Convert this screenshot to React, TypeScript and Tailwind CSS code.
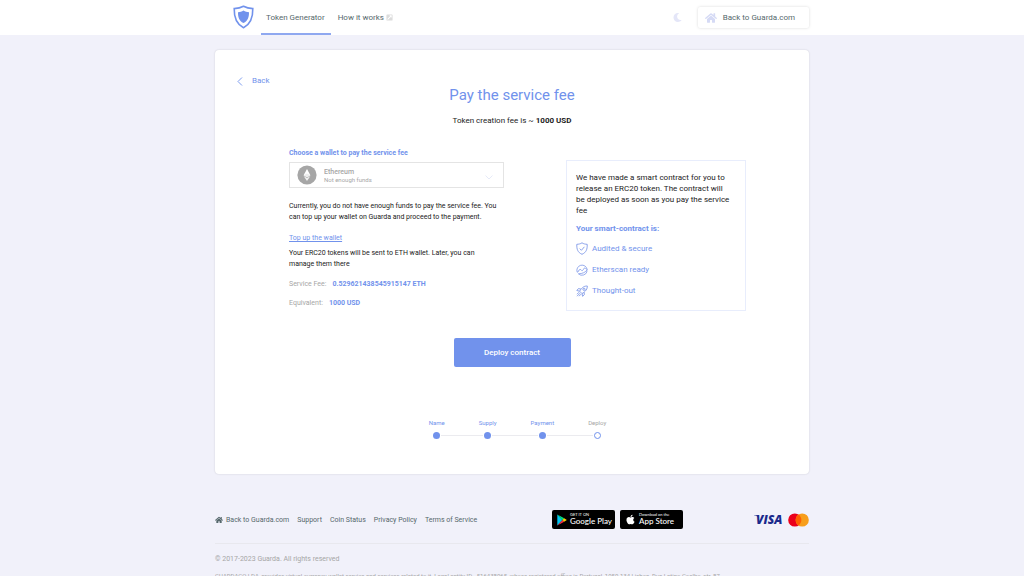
import type { ReactNode } from 'react';
import { FaApple, FaExternalLinkSquareAlt, FaHome, FaMoon } from 'react-icons/fa';

const WALLETS = [{ id: 'eth', name: 'Ethereum', note: 'Not enough funds' }];

const STEPS = [
  { label: 'Name', done: true },
  { label: 'Supply', done: true },
  { label: 'Payment', done: true },
  { label: 'Deploy', done: false },
];

const FOOTER_LINKS = ['Support', 'Coin Status', 'Privacy Policy', 'Terms of Service'];

function GuardaLogo() {
  return (
    <svg viewBox="0 0 21 24" className="h-6 w-[21px]" role="img" aria-label="Guarda">
      <path
        d="M10.5 1.3C13.4 2.9 16.3 3.5 19.8 3.6C20 12.2 18 19.2 10.5 22.7C3 19.2 1 12.2 1.2 3.6C4.7 3.5 7.6 2.9 10.5 1.3Z"
        fill="none"
        stroke="#7192ec"
        strokeWidth="1.6"
      />
      <path
        d="M10.5 5.6C12.2 6.7 13.9 7.1 16 7.2C16.1 12.2 14.8 15.8 10.5 18C6.2 15.8 4.9 12.2 5 7.2C7.1 7.1 8.8 6.7 10.5 5.6Z"
        fill="#7192ec"
      />
    </svg>
  );
}

function EthereumIcon() {
  return (
    <svg viewBox="0 0 20 20" className="h-5 w-5" aria-hidden="true">
      <circle cx="10" cy="10" r="9.6" fill="#a6a6a6" />
      <path d="M10 4L6.6 10.2L10 12.2L13.4 10.2Z" fill="#fff" />
      <path d="M6.6 11L10 16L13.4 11L10 13Z" fill="#f1f1f1" />
      <path d="M10 8.6L6.6 10.2L10 12.2L13.4 10.2Z" fill="#ececec" />
    </svg>
  );
}

function ShieldCheckIcon() {
  return (
    <svg viewBox="0 0 12 13" className="h-[13px] w-3" fill="none" stroke="#7f98e8" strokeWidth="0.9" aria-hidden="true">
      <path d="M6 0.8C7.6 1.9 9.2 2.2 11.2 2.3C11.4 7.4 10.2 10.4 6 12.3C1.8 10.4 0.6 7.4 0.8 2.3C2.8 2.2 4.4 1.9 6 0.8Z" />
      <path d="M3.7 6.6L5.4 8.3L8.4 4.8" />
    </svg>
  );
}

function EtherscanIcon() {
  return (
    <svg viewBox="0 0 12 12" className="h-3 w-3" fill="none" stroke="#7f98e8" strokeWidth="0.8" aria-hidden="true">
      <path d="M1.2 8.2A5.2 5.2 0 1 1 11.2 5.6" />
      <path d="M2.4 9.8A5.2 5.2 0 0 0 11.2 6.6" />
      <path d="M1.2 8.2C2.6 8.6 2.4 5.6 4 5.4C5.4 5.2 5.2 7.2 6.4 6.6C7.8 5.8 7.4 4 8.8 4C10 4 10 5.4 11.2 5.6C9.8 8.2 6.4 9.8 2.4 9.8" />
    </svg>
  );
}

function RocketIcon() {
  return (
    <svg viewBox="0 0 12 12" className="h-3 w-3" fill="none" stroke="#7f98e8" strokeWidth="0.9" aria-hidden="true">
      <path d="M11.3 1C8.4 0.9 6 2.2 3.6 6.2L6 8.6C10 6.2 11.4 3.9 11.3 1Z" />
      <circle cx="8" cy="4.3" r="1.1" />
      <path d="M5 4.1L2.4 3.6L0.8 5.5L3.6 6.2M8 7.2L8.4 9.6L6.6 11.3L6 8.6" />
      <path d="M3 7.2L1 9.2M4 8.2L1 11.2M5 9.2L3 11.2" />
    </svg>
  );
}

function PlayIcon() {
  return (
    <svg viewBox="0 0 10 12" className="h-3 w-[10px] shrink-0" aria-hidden="true">
      <path d="M0.3 0.5V11.5L5.4 6Z" fill="#00c8f4" />
      <path d="M0.3 0.5L5.4 6L7.2 4.2Z" fill="#00e27b" />
      <path d="M0.3 11.5L5.4 6L7.2 7.8Z" fill="#f43249" />
      <path d="M7.2 4.2L5.4 6L7.2 7.8L9.8 6Z" fill="#ffcf00" />
    </svg>
  );
}

function VisaMark() {
  return (
    <svg viewBox="0 0 31 12" className="h-3 w-[31px] overflow-visible" role="img" aria-label="Visa">
      <text x="2" y="10" fontFamily="Open Sans, sans-serif" fontSize="12" fontWeight="800" fontStyle="italic" fill="#1a2a8c">
        VISA
      </text>
      <path d="M0 1.3H4.2L5 4.2C4 2.6 2.4 1.8 0 1.6Z" fill="#1a2a8c" />
    </svg>
  );
}

function MastercardMark() {
  return (
    <svg viewBox="0 0 21 14" className="h-[14px] w-[21px]" role="img" aria-label="Mastercard">
      <circle cx="6.8" cy="7" r="6.6" fill="#eb001b" />
      <circle cx="14.2" cy="7" r="6.6" fill="#f79e1b" />
      <path d="M10.5 1.55A6.6 6.6 0 0 1 10.5 12.45A6.6 6.6 0 0 1 10.5 1.55Z" fill="#ff5f00" />
    </svg>
  );
}

function StoreBadge({ icon, top, name }: { icon: ReactNode; top: string; name: string }) {
  return (
    <a
      href="#"
      className="flex h-[19px] w-[63px] items-center gap-[3px] rounded-xs bg-black pl-[5px] font-['Lato',sans-serif] text-white"
    >
      {icon}
      <span className="flex flex-col whitespace-nowrap">
        <span className="text-[4px] leading-[4px]">{top}</span>
        <span className="text-[8px] leading-[9px] font-medium">{name}</span>
      </span>
    </a>
  );
}

function Header() {
  return (
    <header className="bg-white">
      <div className="mx-auto flex h-[35px] w-full max-w-[594px] items-center pl-[18px]">
        <a href="#" className="pb-[2px]">
          <GuardaLogo />
        </a>
        <nav className="ml-[7px] flex h-full text-[8px] text-[#56686c]">
          <a href="#" className="flex items-center border-b-2 border-[#8fa8f0] pt-[2px] pr-[6px] pl-[5px]">
            Token Generator
          </a>
          <a href="#" className="flex items-center gap-[2px] border-b-2 border-transparent px-[7px] pt-[2px]">
            How it works
            <FaExternalLinkSquareAlt className="h-[7px] w-[7px] text-[#dcdcdc]" />
          </a>
        </nav>
        <div className="ml-auto flex items-center gap-4">
          <button type="button" aria-label="Dark mode">
            <FaMoon className="h-[9px] w-[9px] text-[#e4e6f8]" />
          </button>
          <a
            href="#"
            className="flex h-[21px] items-center gap-[6px] rounded-xs bg-white pr-[14px] pl-[7px] text-[8px] text-[#56686c] shadow-[0_0_3px_rgba(0,0,0,0.15)]"
          >
            <FaHome className="h-3 w-3 text-[#d5daf5]" />
            Back to Guarda.com
          </a>
        </div>
      </div>
    </header>
  );
}

function WalletSelect() {
  return (
    <div className="relative mt-[3px] h-[26px] border border-[#e4e4e4]">
      <select
        id="wallet"
        className="h-full w-full appearance-none bg-transparent pb-[6px] pl-[34px] text-[7px] leading-[9px] font-medium text-[#a6a6a6] outline-none"
      >
        {WALLETS.map((w) => (
          <option key={w.id} value={w.id}>
            {w.name}
          </option>
        ))}
      </select>
      <div className="pointer-events-none absolute inset-0 flex items-center pr-[10px] pl-[7px]">
        <EthereumIcon />
        <span className="mt-[10px] ml-[7px] text-[6px] leading-[8px] text-[#a6a6a6]">{WALLETS[0].note}</span>
        <svg viewBox="0 0 8 5" className="mt-1 ml-auto h-[5px] w-2" fill="none" stroke="#dfe4f6" strokeWidth="0.8" aria-hidden="true">
          <path d="M0.5 0.5L4 4L7.5 0.5" />
        </svg>
      </div>
    </div>
  );
}

function Feature({ icon, children }: { icon: ReactNode; children: ReactNode }) {
  return (
    <li className="flex h-[13px] items-center gap-1">
      {icon}
      {children}
    </li>
  );
}

function Steps() {
  return (
    <ol className="mt-[51px] flex justify-center pl-[11px] text-[6px] leading-[10px]">
      {STEPS.map((step, i) => (
        <li key={step.label} className={step.done ? 'text-[#7192ec]' : 'text-[#a6a6a6]'}>
          <span className="block px-[17px] text-center">{step.label}</span>
          <span className="mt-1 flex items-center gap-px">
            <span className={i === 0 ? 'flex-1' : 'h-px flex-1 bg-[#ebebef]'} />
            <span className={step.done ? 'size-[7px] rounded-full bg-[#7192ec]' : 'size-[7px] rounded-full border border-[#7192ec]'} />
            <span className={i === STEPS.length - 1 ? 'flex-1' : 'h-px flex-1 bg-[#ebebef]'} />
          </span>
        </li>
      ))}
    </ol>
  );
}

function PaymentCard() {
  return (
    <main className="mx-auto mt-[15px] w-full max-w-[594px] rounded-sm bg-white pt-[25px] pb-[35px] shadow-[0_0_2px_rgba(0,0,0,0.16)]">
      <a href="#" className="ml-[22px] flex h-3 w-fit items-center gap-[9px] text-[8px] text-[#7192ec]">
        <svg viewBox="0 0 6 9" className="h-[9px] w-[6px]" fill="none" stroke="#7192ec" strokeWidth="0.9" aria-hidden="true">
          <path d="M5 0.5L1 4.5L5 8.5" />
        </svg>
        Back
      </a>
      <h1 className="text-center text-[15px] leading-[17px] text-[#7192ec]">Pay the service fee</h1>
      <p className="mt-[11px] text-center text-[8px] leading-[11px]">
        Token creation fee is ~ <b>1000 USD</b>
      </p>

      <div className="mx-auto mt-[22px] flex w-full max-w-[468px] justify-between pl-[11px]">
        <div className="w-[215px] text-[7px] leading-[11px]">
          <label htmlFor="wallet" className="block font-bold text-[#7192ec]">
            Choose a wallet to pay the service fee
          </label>
          <WalletSelect />
          <p className="mt-[13px]">
            Currently, you do not have enough funds to pay the service fee. You can top up your wallet on Guarda and
            proceed to the payment.
          </p>
          <a href="#" className="mt-[10px] block text-[#7192ec] underline">
            Top up the wallet
          </a>
          <p className="mt-1 pr-3">Your ERC20 tokens will be sent to ETH wallet. Later, you can manage them there</p>
          <dl>
            <div className="mt-[9px] flex gap-[6px]">
              <dt className="text-[#a6a6a6]">Service Fee:</dt>
              <dd className="font-bold text-[#7192ec]">0.529621438545915147 ETH</dd>
            </div>
            <div className="mt-2 flex gap-[6px]">
              <dt className="text-[#a6a6a6]">Equivalent:</dt>
              <dd className="font-bold text-[#7192ec]">1000 USD</dd>
            </div>
          </dl>
        </div>

        <section className="mt-3 w-[180px] self-start border border-[#e8edfc] pt-[11px] pr-[14px] pb-[13px] pl-[9px] text-[8px] leading-[11px]">
          <p>
            We have made a smart contract for you to release an ERC20 token. The contract will be deployed as soon as
            you pay the service fee
          </p>
          <h2 className="mt-[7px] font-bold text-[#7192ec]">Your smart-contract is:</h2>
          <ul className="mt-2 flex flex-col gap-2 text-[#7192ec]">
            <Feature icon={<ShieldCheckIcon />}>Audited &amp; secure</Feature>
            <Feature icon={<EtherscanIcon />}>Etherscan ready</Feature>
            <Feature icon={<RocketIcon />}>Thought-out</Feature>
          </ul>
        </section>
      </div>

      <button
        type="button"
        className="mx-auto mt-[27px] block h-[29px] w-[117px] rounded-xs bg-[#7192ec] text-[8px] font-medium text-white"
      >
        Deploy contract
      </button>
      <Steps />
    </main>
  );
}

function Footer() {
  return (
    <footer className="mx-auto mt-9 w-full max-w-[594px] pb-6 text-[7px] leading-[10px]">
      <div className="flex h-[19px] items-center text-[#56686c]">
        <nav className="flex gap-2">
          <a href="#" className="flex items-center gap-[3px]">
            <FaHome className="h-2 w-2" />
            Back to Guarda.com
          </a>
          {FOOTER_LINKS.map((label) => (
            <a key={label} href="#">
              {label}
            </a>
          ))}
        </nav>
        <div className="ml-auto flex gap-[5px]">
          <StoreBadge icon={<PlayIcon />} top="GET IT ON" name="Google Play" />
          <StoreBadge icon={<FaApple className="h-[11px] w-[11px] shrink-0" />} top="Download on the" name="App Store" />
        </div>
        <div className="ml-[71px] flex items-center gap-[3px]">
          <VisaMark />
          <MastercardMark />
        </div>
      </div>
      <div className="mt-[14px] border-t border-[#e8e8ee] pt-[10px] text-[#a6a6a6]">
        <p>© 2017-2023 Guarda. All rights reserved</p>
        <p className="mt-[7px] text-[6px]">
          GUARDACO LDA, provides virtual currency wallet service and services related to it. Legal entity ID - 516438065,
          whose registered office is Portugal, 1050-134 Lisboa, Rua Latino Coelho, str. 87
        </p>
      </div>
    </footer>
  );
}

export default function App() {
  return (
    <div className="min-h-screen bg-[#f1f1fa] font-['Roboto',sans-serif] text-[#222]">
      <Header />
      <PaymentCard />
      <Footer />
    </div>
  );
}
